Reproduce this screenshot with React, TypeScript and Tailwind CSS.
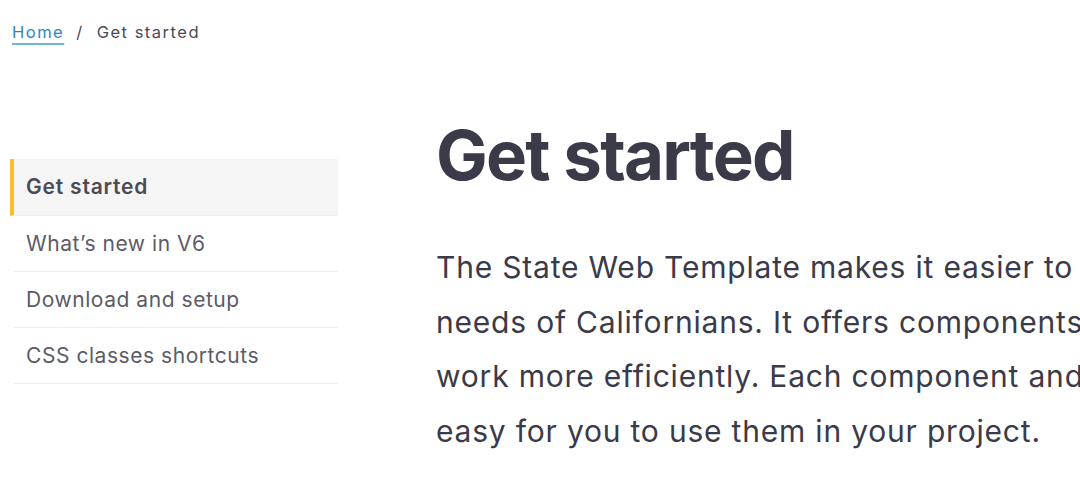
import React from "react";

export default function App() {
  const items = ["Get started", "What’s new in V6", "Download and setup", "CSS classes shortcuts"];
  return (
    <div className="w-[1080px] h-[492px] overflow-hidden bg-white font-['Inter',sans-serif]">
      <nav className="h-[43px] pl-[12px] pt-[20px] flex items-start text-[16.5px] leading-[24px] tracking-[1.5px] text-[#4b4b57]">
        <a className="text-[#2b87c2] underline decoration-[#6fb3df] decoration-2 underline-offset-[5px]">Home</a>
        <span className="ml-[12px] mr-[13px]">/</span>
        <span>Get started</span>
      </nav>
      <div className="flex mt-[116px]">
        <ul className="ml-[10px] w-[328px] shrink-0">
          {items.map((t, i) => (
            <li
              key={t}
              className={
                i === 0
                  ? "h-[57px] flex items-center border-l-[4px] border-[#fbbd2e] bg-[#f5f5f5] pl-[12px] text-[21px] tracking-[0.8px] font-semibold text-[#4b4b57] border-b border-b-[#eeeeee]"
                  : "h-[56px] flex items-center ml-[4px] pl-[12px] text-[21px] tracking-[0.55px] text-[#5c5b68] border-b border-[#eeeeee]"
              }
            >
              {t}
            </li>
          ))}
        </ul>
        <main className="ml-[98px] -mt-[46px] text-[#3b3a48]">
          <h1 className="text-[69px] leading-[84px] font-bold tracking-[-1.8px] whitespace-nowrap">Get started</h1>
          <p className="mt-[43px] text-[30px] leading-[54.7px] tracking-[0.8px] whitespace-nowrap">
            The State Web Template makes it easier to
            <br />
            needs of Californians. It offers components
            <br />
            work more efficiently. Each component and
            <br />
            easy for you to use them in your project.
          </p>
        </main>
      </div>
    </div>
  );
}
